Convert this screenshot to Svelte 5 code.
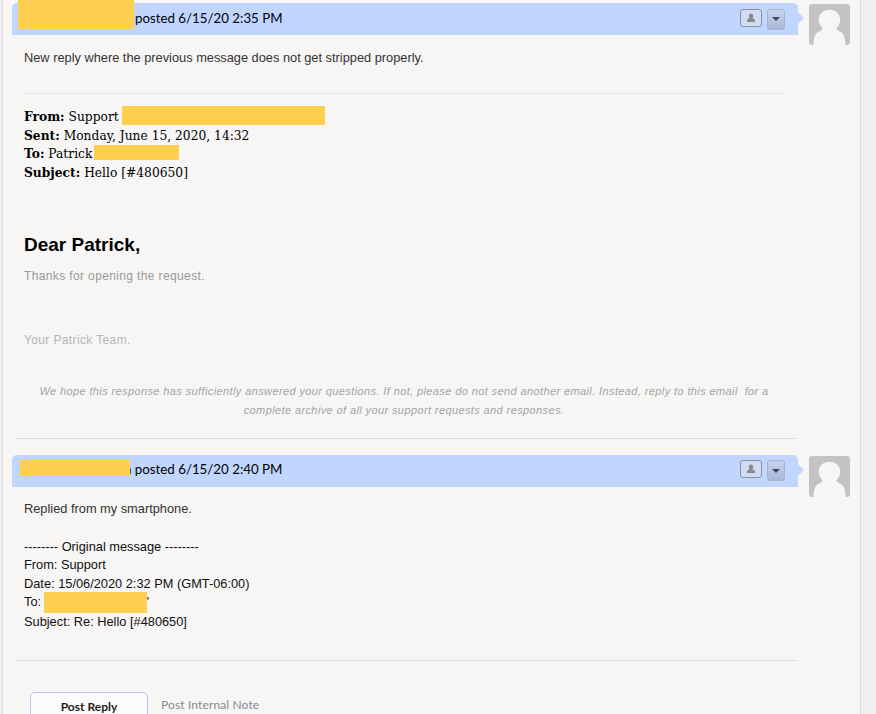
<script lang="ts">
  // Ticket thread: two posted replies and the start of the reply tabs.
  const avatarPath = 'M21 6c-6 0-11 4-11 10 0 4 2 7 4 9-1 2-3 3-5 4-3 2-4 6-4.500 13h33c-.5-7-1.500-11-4.500-13-2-1-4-2-5-4 2-2 4-5 4-9 0-6-5-10-11-10z';
</script>

<div class="page">
  <main class="panel">
    <article class="entry first">
      <div class="head-row">
        <header class="bar">
          <span class="mask mask-a"></span>
          <span class="posted">posted 6/15/20 2:35 PM</span>
          <span class="tools">
            <span class="tool user">
              <svg viewBox="0 0 10 10" width="10" height="10"><path d="M5 .5c-1.500 0-2.200 1.100-2.200 2.400 0 1 .4 1.800 1 2.300-1.400.3-2.800 1-2.800 2.300v1.500h8V7.500c0-1.300-1.400-2-2.800-2.300.6-.5 1-1.300 1-2.300C7.200 1.600 6.500.5 5 .5z" fill="#8a8a8a"/></svg>
            </span>
            <span class="tool more"><i></i></span>
          </span>
        </header>
        <svg class="avatar" viewBox="0 0 42 42" width="41" height="41"><rect width="42" height="42" rx="3" fill="#c3c3c3"/><path d={avatarPath} fill="#f7f6f5"/></svg>
      </div>
      <div class="body">
        <p class="lead">New reply where the previous message does not get stripped properly.</p>
        <hr class="soft" />
        <div class="quoted">
          <div><b>From:</b> Support <span class="mask-inline from"></span></div>
          <div><b>Sent:</b> Monday, June 15, 2020, 14:32</div>
          <div><b>To:</b> Patrick<span class="mask-inline to"></span></div>
          <div><b>Subject:</b> Hello [#480650]</div>
        </div>
        <h2>Dear Patrick,</h2>
        <p class="thanks">Thanks for opening the request.</p>
        <p class="team">Your Patrick Team.</p>
        <p class="note">We hope this response has sufficiently answered your questions. If not, please do not send another email. Instead, reply to this email&nbsp; for a complete archive of all your support requests and responses.</p>
      </div>
    </article>
    <hr class="rule" />

    <article class="entry second">
      <div class="head-row">
        <header class="bar cut">
          <span class="mask mask-b"></span>
          <span class="posted">n posted 6/15/20 2:40 PM</span>
          <span class="tools">
            <span class="tool user">
              <svg viewBox="0 0 10 10" width="10" height="10"><path d="M5 .5c-1.500 0-2.200 1.100-2.200 2.400 0 1 .4 1.800 1 2.300-1.400.3-2.800 1-2.800 2.300v1.500h8V7.500c0-1.300-1.400-2-2.800-2.300.6-.5 1-1.300 1-2.300C7.200 1.600 6.500.5 5 .5z" fill="#8a8a8a"/></svg>
            </span>
            <span class="tool more"><i></i></span>
          </span>
        </header>
        <svg class="avatar" viewBox="0 0 42 42" width="41" height="41"><rect width="42" height="42" rx="3" fill="#c3c3c3"/><path d={avatarPath} fill="#f7f6f5"/></svg>
      </div>
      <div class="body">
        <p class="lead tight">Replied from my smartphone.</p>
        <div class="original">
          <div>-------- Original message --------</div>
          <div>From: Support</div>
          <div>Date: 15/06/2020 2:32 PM (GMT-06:00)</div>
          <div>To: <span class="mask-inline phone"></span>'</div>
          <div>Subject: Re: Hello [#480650]</div>
        </div>
      </div>
    </article>
    <hr class="rule last" />

    <nav class="tabs">
      <span class="tab active">Post Reply</span>
      <span class="tab">Post Internal Note</span>
    </nav>
  </main>
</div>

<style>
  :global(body) { margin: 0; background: #f0f0f0; }
  .page { height: 714px; overflow: hidden; font-family: "Liberation Sans", Arial, sans-serif; }
  .panel {
    width: 859px; height: 714px; margin-left: 2px; box-sizing: border-box; overflow: hidden;
    background: #f7f6f5; border-left: 1px solid #dcdcdc; border-right: 1px solid #dcdcdc;
  }
  .entry { margin-left: 9px; }
  .first { padding-top: 3px; }
  .second { padding-top: 16px; }
  .head-row { display: flex; align-items: flex-start; gap: 11px; min-height: 43px; }
  .bar {
    position: relative; flex: none; width: 786px; height: 32px; box-sizing: border-box;
    display: flex; align-items: center; padding: 0 0 2px 123px;
    background: #c0d6ff; border-radius: 5px 5px 0 0;
    font: 13.300px/18px Lato, sans-serif; color: #000;
  }
  .bar.cut { padding-left: 112px; }
  .cut .posted { margin-bottom: 2px; }
  /* small arrow pointing at the avatar */
  .bar::after {
    content: ""; position: absolute; right: -6px; top: 9px;
    border-left: 6px solid #c0d6ff; border-top: 6px solid transparent; border-bottom: 6px solid transparent;
  }
  .tools { margin-left: auto; margin-right: 13px; display: flex; gap: 5px; align-items: flex-start; padding-top: 2px; }
  .tool { display: flex; align-items: center; justify-content: center; box-sizing: border-box; border-radius: 3px; }
  .user { width: 22px; height: 18px; border: 1px solid #8f9298; background: #cfdcf4; }
  .more { width: 18px; height: 21px; border: 1px solid #a6b3cc; background: linear-gradient(#c5d3ee, #a9b8d6); }
  .more i { border-top: 4px solid #3c4658; border-left: 4px solid transparent; border-right: 4px solid transparent; }
  .avatar { flex: none; margin-top: 1px; }
  .mask { position: absolute; background: #ffcf4f; }
  .mask-a { left: 6px; top: -3px; width: 116px; height: 29px; }
  .mask-b { left: 8px; top: 5px; width: 110px; height: 16px; }
  .mask-inline { display: inline-block; background: #ffcf4f; vertical-align: top; }
  .from { width: 203px; height: 19px; margin-left: -1px; margin-top: -2px; }
  .to { width: 85px; height: 15px; margin-top: 0; margin-left: 2px; }
  .phone { width: 103px; height: 21px; margin-left: -1px; margin-top: -1px; }
  .body { padding: 0 0 0 12px; width: 760px; }
  .lead { margin: 0; padding-top: 4px; font-size: 12.800px; line-height: 16px; color: #333; }
  .lead.tight { padding-top: 3px; }
  .soft { margin: 27px 0 0; width: 760px; border: 0; border-top: 1px solid #e6e5e8; }
  .quoted { margin-top: 14px; font: 12.280px/18.700px "DejaVu Serif", serif; color: #000; }
  h2 { margin: 49px 0 0; font-size: 19px; line-height: 26px; font-weight: 700; color: #000; }
  .thanks { margin: 10px 0 0; font-size: 12px; line-height: 16px; letter-spacing: .37px; color: #999; }
  .team { margin: 48px 0 0; font-size: 12px; line-height: 16px; letter-spacing: .37px; color: #b5b5b5; }
  .note {
    margin: 34px 0 0; font-size: 11px; line-height: 19px; font-style: italic; letter-spacing: .39px;
    color: #a3a3a3; text-align: center;
  }
  .rule { margin: 18px 0 0 12px; width: 781px; border: 0; border-top: 1px solid #dcdcdc; }
  .rule.last { margin-top: 28.500px; }
  .original { margin-top: 21px; font-size: 12.800px; line-height: 18.400px; color: #111; }
  .tabs { display: flex; align-items: flex-start; gap: 13px; margin: 31px 0 0 27px; font: 12px/16px Lato, sans-serif; }
  .tab { padding-top: 5px; color: #8b8793; letter-spacing: .13px; }
  .active {
    box-sizing: border-box; width: 118px; height: 40px; padding-top: 6px; text-align: center;
    background: #fbfbfb; border: 1px solid #b8c8e0; border-radius: 5px 5px 0 0;
    font-weight: 700; color: #222; letter-spacing: 0;
  }
</style>
